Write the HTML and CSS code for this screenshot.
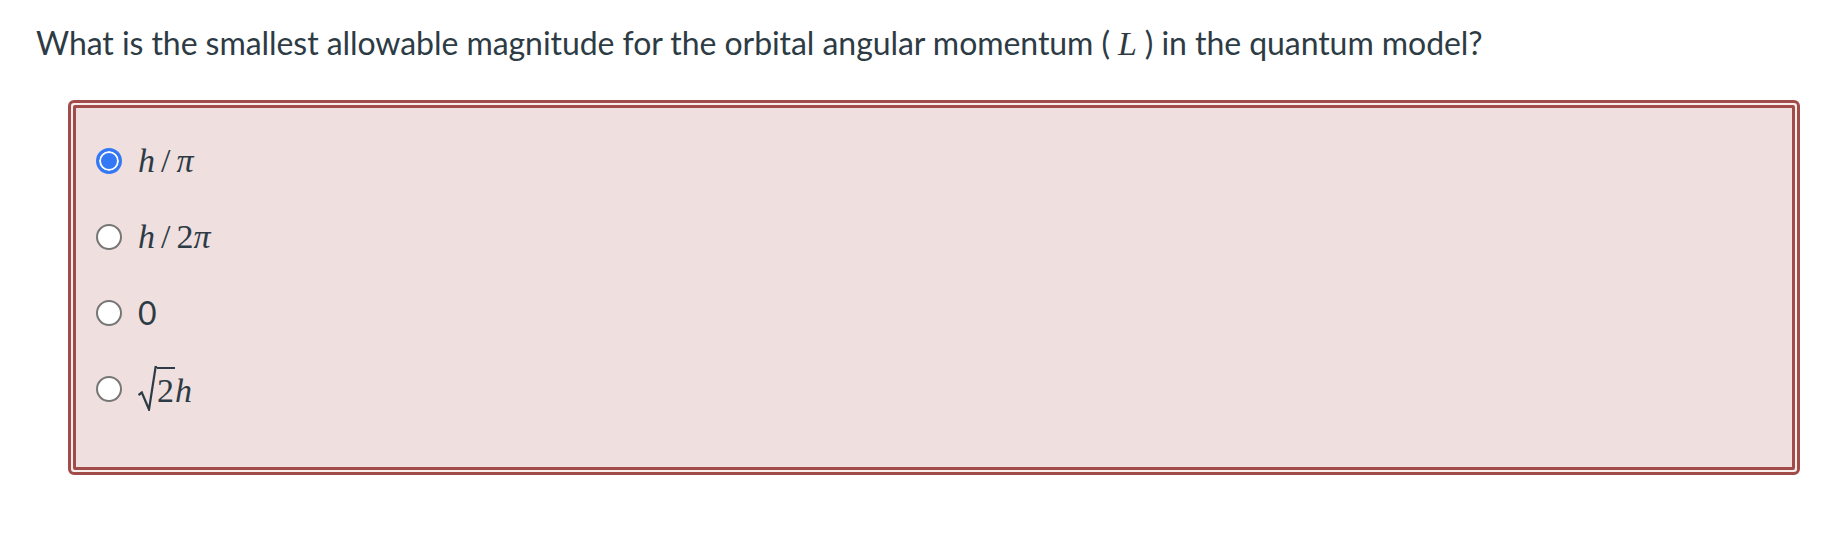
FILE: index.html
```html
<!DOCTYPE html>
<html lang="en">
<head>
    <meta charset="UTF-8">
    <meta name="viewport" content="width=device-width, initial-scale=1.0">
    <title>Quiz Question</title>
    <link rel="stylesheet" href="styles.css">
</head>
<body>

<div class="question">
    <p class="question-text">
        What is the smallest allowable magnitude for the orbital angular momentum (<span class="math math-inline">L</span>) in the quantum model?
    </p>

    <div class="answers-frame">
        <div class="answers">
            <label class="answer">
                <input type="radio" name="q1" checked>
                <span class="math">h<span class="slash">/</span>π</span>
            </label>
            <label class="answer">
                <input type="radio" name="q1">
                <span class="math">h<span class="slash">/</span><span class="upright">2</span>π</span>
            </label>
            <label class="answer">
                <input type="radio" name="q1">
                <span class="plain">0</span>
            </label>
            <label class="answer">
                <input type="radio" name="q1">
                <span class="math"><svg class="radical" width="19" height="45" viewBox="0 0 19 45"><path d="M0.5 29 L3.8 26.5 L11 43.5 L17.6 1 H19" fill="none" stroke="#2d3b45" stroke-width="2.2" stroke-linejoin="miter"/></svg><span class="radicand upright">2</span>h</span>
            </label>
        </div>
    </div>
</div>

</body>
</html>
```

FILE: styles.css
```css
* {
    box-sizing: border-box;
    margin: 0;
    padding: 0;
}

body {
    font-family: 'Lato', 'Liberation Sans', sans-serif;
    color: #2d3b45;
    background: #fff;
}

.question {
    padding: 24px 42px 0 36px;
}

.question-text {
    font-size: 32px;
    line-height: 1.2;
    letter-spacing: -0.06px;
}

.math {
    font-family: 'Liberation Serif', 'Times New Roman', serif;
    font-style: italic;
    font-size: 34px;
}

.math-inline {
    margin: 0 8px;
}

.upright {
    font-style: normal;
}

.slash {
    font-style: normal;
    margin: 0 6px;
}

.radical {
    vertical-align: -9px;
}

.radicand {
    display: inline-block;
    border-top: 2px solid #2d3b45;
    line-height: 34px;
    padding: 5px 1px 0 0;
}

/* double frame round the answers */
.answers-frame {
    margin: 35px 0 0 32px;
    border: 3px solid #a14c49;
    border-radius: 6px;
    padding: 2px;
    background: #f7eeee;
}

.answers {
    border: 3px solid #a14c49;
    border-radius: 2px;
    background: #efdfdf;
    padding: 15px 20px 40px;
    display: flex;
    flex-direction: column;
}

.answer {
    display: flex;
    align-items: center;
    gap: 16px;
    height: 76px;
    cursor: pointer;
}

.answer input {
    appearance: none;
    -webkit-appearance: none;
    width: 26px;
    height: 26px;
    border-radius: 50%;
    border: 2px solid #767676;
    background: #fff;
    flex-shrink: 0;
}

.answer input:checked {
    border: 3px solid #3478f6;
    background: #3478f6;
    box-shadow: inset 0 0 0 2px #fff;
}

.plain {
    font-size: 32px;
}
```
